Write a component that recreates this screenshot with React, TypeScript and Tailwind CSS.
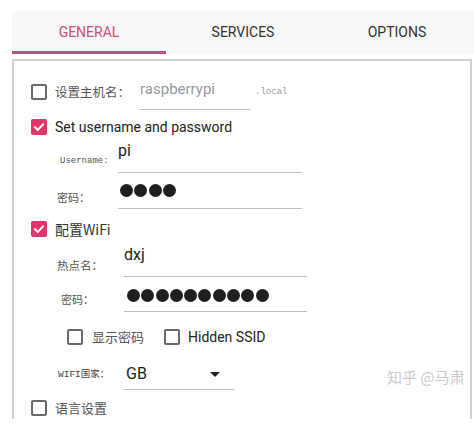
import React from "react";

const CJK = { fontFamily: '"Noto Sans CJK SC", "Noto Sans", sans-serif' };
const ROBOTO = { fontFamily: 'Roboto, "Noto Sans CJK SC", sans-serif' };
const MONO = { fontFamily: '"Liberation Mono", "Noto Sans CJK SC", monospace' };

function Box({ checked }: { checked?: boolean }) {
  if (checked) {
    return (
      <div className="w-[16px] h-[16px] rounded-[2px] bg-[#e2336b] flex items-center justify-center shrink-0">
        <svg width="12" height="12" viewBox="0 0 12 12">
          <path d="M2 6.2 L4.8 9 L10 3.4" fill="none" stroke="#fff" strokeWidth="2" strokeLinecap="square" />
        </svg>
      </div>
    );
  }
  return <div className="w-[16px] h-[16px] rounded-[2px] border-2 border-[#6a6a6a] shrink-0" />;
}

function Dots({ n }: { n: number }) {
  return (
    <div className="flex gap-[1.3px] h-[20px] items-center">
      {Array.from({ length: n }).map((_, i) => (
        <div key={i} className="w-[13px] h-[13px] rounded-full bg-[#1f1f1f]" />
      ))}
    </div>
  );
}

export default function App() {
  return (
    <div className="w-[474px] h-[424px] bg-white overflow-hidden relative">
      {/* Tabs */}
      <div className="mt-[11px] ml-[12px] h-[43px] bg-[#f8f8f8] flex" style={ROBOTO}>
        <div className="w-[154px] h-full flex items-center justify-center relative text-[14px] text-[#c4507e]">
          GENERAL
          <div className="absolute left-0 right-0 bottom-0 h-[3px] bg-[#bf4f7c]" />
        </div>
        <div className="w-[154px] h-full flex items-center justify-center text-[14px] text-[#333]">SERVICES</div>
        <div className="w-[154px] h-full flex items-center justify-center text-[14px] text-[#333]">OPTIONS</div>
      </div>

      {/* Panel */}
      <div className="mt-[5px] ml-[12px] mr-[2px] h-[360px] border-2 border-b-0 border-[#cfcfcf] pl-[17px]">
        {/* hostname */}
        <div className="mt-[11px] h-[40px] flex items-center">
          <Box />
          <span className="ml-[8px] text-[12.5px] text-[#555]" style={CJK}>设置主机名：</span>
          <div className="ml-[10px] w-[110px] h-[30px] mt-[6px] border-b border-[#bdbdbd] flex items-start">
            <span className="text-[15px] leading-[18px] text-[#9a9a9a]" style={ROBOTO}>raspberrypi</span>
          </div>
          <span className="ml-[5px] text-[9px] text-[#9a9a9a] mt-[2px]" style={MONO}>.local</span>
        </div>

        {/* set username */}
        <div className="mt-[3px] h-[24px] flex items-center">
          <Box checked />
          <span className="ml-[8px] text-[14px] text-[#222]" style={ROBOTO}>Set username and password</span>
        </div>

        {/* username */}
        <div className="mt-[2px] h-[32px] flex items-end pl-[29px]">
          <span className="w-[58px] pb-[7px] text-[9px] leading-[10px] text-[#555]" style={MONO}>Username:</span>
          <div className="w-[184px] h-[32px] border-b border-[#bdbdbd] pb-[11px] flex items-end">
            <span className="text-[16px] leading-[20px] text-[#222]" style={ROBOTO}>pi</span>
          </div>
        </div>

        {/* password */}
        <div className="mt-[4px] h-[32px] flex items-end pl-[26px]">
          <span className="w-[61px] pb-[6px] text-[11px] leading-[12px] text-[#555]" style={CJK}>密码：</span>
          <div className="w-[184px] h-[32px] border-b border-[#bdbdbd] pb-[8px] pl-[2px] flex items-end">
            <Dots n={4} />
          </div>
        </div>

        {/* wifi */}
        <div className="mt-[8px] h-[24px] flex items-center">
          <Box checked />
          <span className="ml-[8px] text-[14px] text-[#333]" style={CJK}>配置WiFi</span>
        </div>

        {/* ssid */}
        <div className="mt-[2px] h-[34px] flex items-end pl-[26px]">
          <span className="w-[67px] pb-[6px] text-[11.5px] leading-[12px] text-[#555]" style={CJK}>热点名：</span>
          <div className="w-[183px] h-[34px] border-b border-[#bdbdbd] pb-[11px] flex items-end">
            <span className="text-[16px] leading-[20px] text-[#222]" style={ROBOTO}>dxj</span>
          </div>
        </div>

        {/* wifi password */}
        <div className="mt-[1px] h-[34px] flex items-end pl-[30px]">
          <span className="w-[63px] pb-[7px] text-[11px] leading-[12px] text-[#555]" style={CJK}>密码：</span>
          <div className="w-[183px] h-[34px] border-b border-[#bdbdbd] pb-[6px] pl-[3px] flex items-end">
            <Dots n={10} />
          </div>
        </div>

        {/* show password / hidden ssid */}
        <div className="mt-[13px] h-[24px] flex items-center pl-[36px]">
          <Box />
          <span className="ml-[9px] text-[13px] text-[#555]" style={CJK}>显示密码</span>
          <div className="ml-[20px]">
            <Box />
          </div>
          <span className="ml-[8px] text-[14px] text-[#222]" style={ROBOTO}>Hidden SSID</span>
        </div>

        {/* country */}
        <div className="mt-[8px] h-[33px] flex items-end pl-[27px]">
          <span className="w-[66px] pb-[9px] text-[9.5px] leading-[12px] text-[#444] whitespace-nowrap" style={MONO}>
            WIFI<span style={CJK}>国家：</span>
          </span>
          <div className="w-[110px] h-[33px] border-b border-[#bdbdbd] pb-[5px] pl-[2px] pr-[14px] flex items-end justify-between">
            <span className="text-[16px] leading-[20px] text-[#222]" style={ROBOTO}>GB</span>
            <svg width="10" height="20" viewBox="0 0 10 20">
              <path d="M0 8 L10 8 L5 13 Z" fill="#222" />
            </svg>
          </div>
        </div>

        {/* language */}
        <div className="mt-[6px] h-[24px] flex items-center">
          <Box />
          <span className="ml-[8px] text-[13px] text-[#555]" style={CJK}>语言设置</span>
        </div>
      </div>

      {/* watermark */}
      <div className="absolute left-[387px] top-[366px] text-[15px] text-[#cacaca]" style={CJK}>知乎 @马肃</div>
    </div>
  );
}
